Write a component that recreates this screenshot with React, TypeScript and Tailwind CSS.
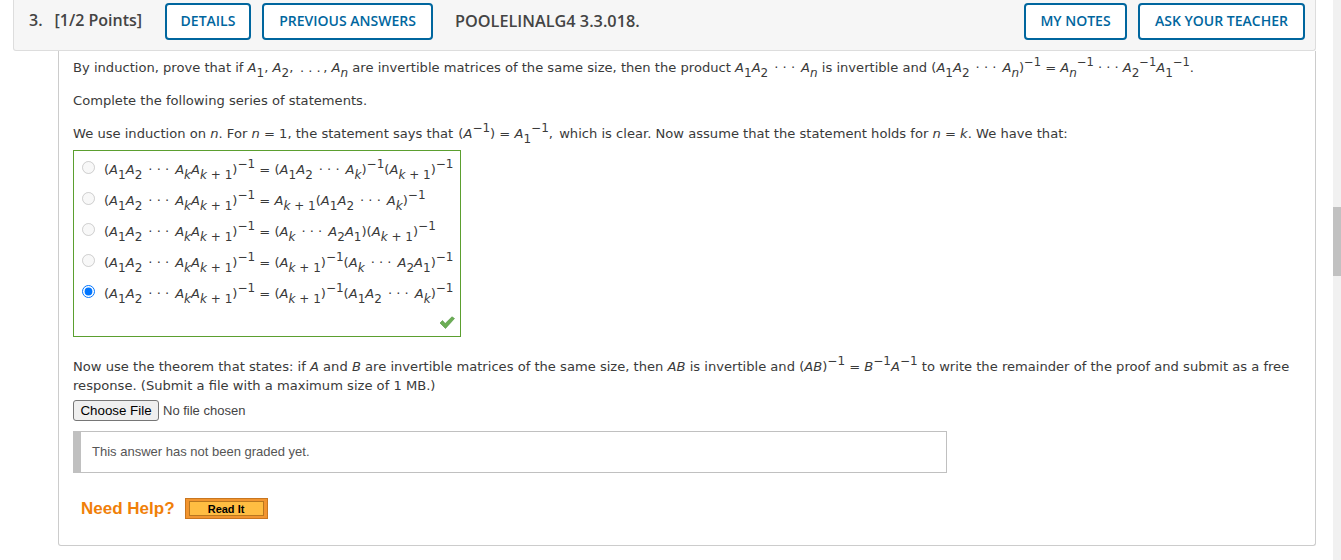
import React from "react";

const I = ({ children }: { children: React.ReactNode }) => <i>{children}</i>;
const Sb = ({ children }: { children: React.ReactNode }) => (
  <sub className="static align-[-5px] text-[12px] leading-none">{children}</sub>
);
const Sp = () => <sup className="static align-[6px] text-[12px] leading-none">−1</sup>;
const Sn = () => <sup className="static align-[6px] text-[11.5px] leading-none">−1</sup>;
const Dots = () => <span className="mx-[6px]">· · ·</span>;
const A = ({ n, k }: { n?: string; k?: string }) => (
  <>
    <I>A</I>
    {n && <Sb>{n}</Sb>}
    {k && (
      <Sb>
        <I>{k}</I>
      </Sb>
    )}
  </>
);
const Ak1 = () => (
  <>
    <I>A</I>
    <Sb>
      <I>k</I> + 1
    </Sb>
  </>
);
const Lhs = () => (
  <>
    (<A n="1" />
    <A n="2" />
    <Dots />
    <A k="k" />
    <Ak1 />)<Sp /> ={" "}
  </>
);

const rows: React.ReactNode[] = [
  <>
    (<A n="1" />
    <A n="2" />
    <Dots />
    <A k="k" />)<Sp />(<Ak1 />)<Sp />
  </>,
  <>
    <Ak1 />(<A n="1" />
    <A n="2" />
    <Dots />
    <A k="k" />)<Sp />
  </>,
  <>
    (<A k="k" />
    <Dots />
    <A n="2" />
    <A n="1" />)(<Ak1 />)<Sp />
  </>,
  <>
    (<Ak1 />)<Sp />(<A k="k" />
    <Dots />
    <A n="2" />
    <A n="1" />)<Sp />
  </>,
  <>
    (<Ak1 />)<Sp />(<A n="1" />
    <A n="2" />
    <Dots />
    <A k="k" />)<Sp />
  </>,
];

const Btn = ({ children, w }: { children: React.ReactNode; w: string }) => (
  <button className={`${w} h-[37px] whitespace-nowrap rounded-[4px] border-2 border-[#00669e] bg-white pb-[2px] text-[14px] font-semibold text-[#00669e]`}>
    {children}
  </button>
);

export default function App() {
  return (
    <div className="flex h-[560px] w-[1341px] overflow-hidden bg-white text-[13.1px] text-[#3a3a3a] [font-family:'DejaVu_Sans',sans-serif]">
      <main className="w-[1333px] pl-[13px] pr-[17px]">
        <header className="flex h-[51px] items-start rounded-b-[3px] border border-t-0 border-[#dddddd] bg-[#f6f6f6] pl-[15px] pr-[10px] pt-[3px] [font-family:'Open_Sans',sans-serif] text-[#444]">
          <span className="mt-[6px] flex w-[136px] shrink-0 gap-[12px] whitespace-nowrap text-[16px] font-semibold leading-[22px]">
            <span>3.</span>
            <span>[1/2 Points]</span>
          </span>
          <div className="flex gap-[11px]">
            <Btn w="w-[86px]">DETAILS</Btn>
            <Btn w="w-[171px]">PREVIOUS ANSWERS</Btn>
          </div>
          <span className="ml-[22px] mt-[7px] text-[16.25px] font-semibold leading-[22px]">POOLELINALG4 3.3.018.</span>
          <div className="ml-auto flex gap-[11px]">
            <Btn w="w-[103px]">MY NOTES</Btn>
            <Btn w="w-[167px]">ASK YOUR TEACHER</Btn>
          </div>
        </header>
        <section className="ml-[45px] h-[495px] rounded-b-[3px] border border-t-0 border-[#cccccc] pl-[14px] pr-[14px] pt-[4px]">
          <p className="h-[33px] whitespace-nowrap leading-[26px]">
            By induction, prove that if <A n="1" />, <A n="2" />, <span className="mx-[2.5px]">. . .</span>, <A k="n" /> are invertible matrices of the same size, then the product <A n="1" />
            <A n="2" />
            <Dots />
            <A k="n" /> is invertible and (<A n="1" />
            <A n="2" />
            <Dots />
            <A k="n" />)<Sn /> = <A k="n" />
            <Sn />
            <span className="mx-[4px]">· · ·</span>
            <A n="2" />
            <Sn />
            <A n="1" />
            <Sn />.
          </p>
          <p className="h-[33px] leading-[26px]">Complete the following series of statements.</p>
          <p className="h-[29px] whitespace-nowrap leading-[26px]">
            We use induction on <I>n</I>. For <I>n</I> = 1, the statement says that <span className="ml-[1px]">(</span><I>A</I>
            <Sp />) = <A n="1" />
            <Sp />, <span className="ml-[2px]">which</span> is clear. Now assume that the statement holds for <I>n</I> = <I>k</I>. We have that:
          </p>
          <div className="relative h-[187px] w-[388px] border border-[#5b9f2f] pl-[8px] pt-[2px]">
            {rows.map((r, i) => (
              <label key={i} className="flex h-[31px] items-center whitespace-nowrap">
                <input
                  type="radio"
                  name="q"
                  readOnly
                  checked={i === 4}
                  disabled={i !== 4}
                  className="mb-[2px] mr-[9px] h-[13px] w-[13px] accent-[#0075ff]"
                />
                <span className="pt-[2px]">
                  <Lhs />
                  {r}
                </span>
              </label>
            ))}
            <svg className="absolute bottom-[7px] right-[5px] h-[13px] w-[16px]" viewBox="0 0 16 13">
              <path d="M1 7 L3.5 4.5 L6.2 7.5 L13 .8 L15.5 2.5 L6.5 12.5 Z" fill="#6cae55" stroke="#4f9440" strokeWidth=".6" />
            </svg>
          </div>
          <p className="mt-[18px] leading-[19px]">
            Now use the theorem that states: if <I>A</I> and <I>B</I> are invertible matrices of the same size, then <I>AB</I> is invertible and (<I>AB</I>)<Sp /> = <I>B</I>
            <Sp />
            <I>A</I>
            <Sp /> to write the remainder of the proof and submit as a free response. (Submit a file with a maximum size of 1 MB.)
          </p>
          <div className="mt-[5px] flex items-center text-[13.33px] [font-family:'Liberation_Sans',sans-serif]">
            <button className="h-[21px] w-[86px] rounded-[3px] border border-[#767676] bg-[#efefef] text-black">Choose File</button>
            <span className="ml-[4px] text-[13px] text-[#444]">No file chosen</span>
          </div>
          <div className="mt-[10px] flex h-[42px] w-[874px] items-center border border-l-[8px] border-[#c0c0c0] pl-[11px] text-[13px] text-[#555] [font-family:'Liberation_Sans',sans-serif]">
            This answer has not been graded yet.
          </div>
          <div className="ml-[8px] mt-[23px] flex items-center [font-family:'Liberation_Sans',sans-serif]">
            <span className="text-[17px] font-bold text-[#f07f09]">Need Help?</span>
            <button className="ml-[10px] flex h-[21px] w-[83px] items-center justify-center border border-[#c9761f] bg-[#f2952f] p-[3px]">
              <span className="flex h-[15px] w-full items-center justify-center border border-[#b9771f] bg-[#ffbd42] text-[11px] font-bold text-black">Read It</span>
            </button>
          </div>
        </section>
      </main>
      <aside className="h-full w-[8px] bg-[#f1f1f1]">
        <div className="mt-[207px] h-[69px] w-full bg-[#c1c1c1]" />
      </aside>
    </div>
  );
}
